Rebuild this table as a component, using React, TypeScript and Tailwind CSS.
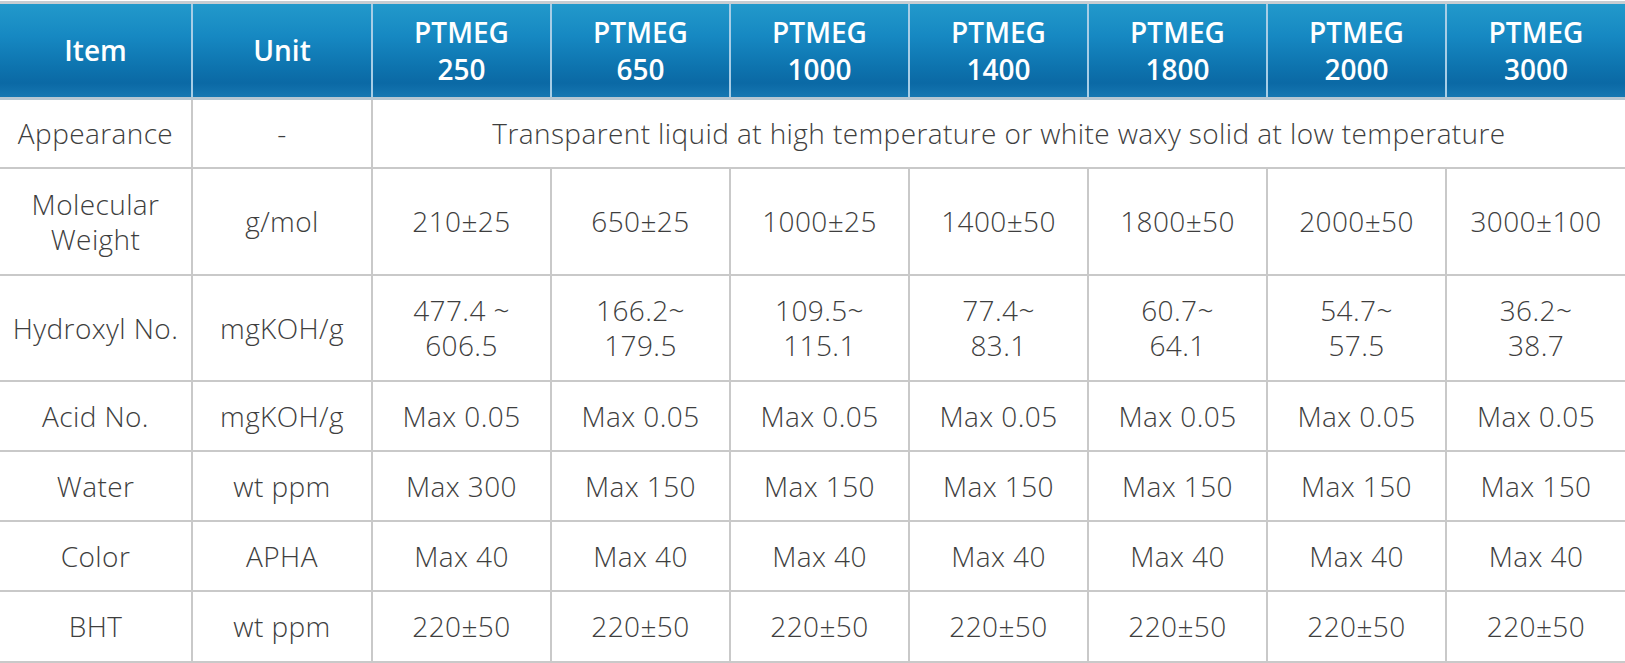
const columns = ['250', '650', '1000', '1400', '1800', '2000', '3000'];

type Row = {
  item: string[];
  unit: string;
  values?: string[][];
  span?: string;
  height: string;
};

const rows: Row[] = [
  {
    item: ['Appearance'],
    unit: '-',
    span: 'Transparent liquid at high temperature or white waxy solid at low temperature',
    height: 'h-[69px]',
  },
  {
    item: ['Molecular', 'Weight'],
    unit: 'g/mol',
    values: [['210±25'], ['650±25'], ['1000±25'], ['1400±50'], ['1800±50'], ['2000±50'], ['3000±100']],
    height: 'h-[107px]',
  },
  {
    item: ['Hydroxyl No.'],
    unit: 'mgKOH/g',
    values: [
      ['477.4 ~', '606.5'],
      ['166.2~', '179.5'],
      ['109.5~', '115.1'],
      ['77.4~', '83.1'],
      ['60.7~', '64.1'],
      ['54.7~', '57.5'],
      ['36.2~', '38.7'],
    ],
    height: 'h-[106px]',
  },
  {
    item: ['Acid No.'],
    unit: 'mgKOH/g',
    values: Array(7).fill(['Max 0.05']),
    height: 'h-[70px]',
  },
  {
    item: ['Water'],
    unit: 'wt ppm',
    values: [['Max 300'], ['Max 150'], ['Max 150'], ['Max 150'], ['Max 150'], ['Max 150'], ['Max 150']],
    height: 'h-[70px]',
  },
  {
    item: ['Color'],
    unit: 'APHA',
    values: Array(7).fill(['Max 40']),
    height: 'h-[70px]',
  },
  {
    item: ['BHT'],
    unit: 'wt ppm',
    values: Array(7).fill(['220±50']),
    height: 'h-[71px]',
  },
];

function Lines({ lines }: { lines: string[] }) {
  return (
    <div className="text-center leading-[35px] whitespace-nowrap">
      {lines.map((l, i) => (
        <div key={i}>{l}</div>
      ))}
    </div>
  );
}

function HeadCell({ lines, last }: { lines: string[]; last?: boolean }) {
  return (
    <div
      className={`flex items-center justify-center ${last ? '' : 'border-r-2 border-[#a7cde6]'}`}
    >
      <div className="text-center leading-[37px]">
        {lines.map((l, i) => (
          <div key={i}>{l}</div>
        ))}
      </div>
    </div>
  );
}

export default function App() {
  return (
    <div className="w-[1625px] h-[663px] bg-white pt-[1px] font-['Open_Sans','Liberation_Sans',sans-serif]">
      <div className="grid grid-cols-[193px_180px_repeat(6,179px)_1fr] border-t-[3px] border-[#c7cdd2]">
        {/* Header */}
        <div className="col-span-9 grid grid-cols-subgrid h-[96px] border-b-[3px] border-[#b6c6d2] bg-[linear-gradient(180deg,#2299cb_0%,#1688c2_35%,#0d72ad_70%,#0b69a5_85%,#1677b2_100%)] text-white font-semibold text-[28px]">
          <HeadCell lines={['Item']} />
          <HeadCell lines={['Unit']} />
          {columns.map((c, i) => (
            <HeadCell key={c} lines={['PTMEG', c]} last={i === columns.length - 1} />
          ))}
        </div>

        {/* Body */}
        {rows.map((row) => (
          <div
            key={row.item.join(' ')}
            className={`col-span-9 grid grid-cols-subgrid ${row.height} text-[28px] font-light tracking-[0.4px] text-[#3e3e3e]`}
          >
            <div className="flex items-center justify-center border-r-2 border-b-2 border-[#c9c9c9]">
              <Lines lines={row.item} />
            </div>
            <div className="flex items-center justify-center border-r-2 border-b-2 border-[#c9c9c9]">
              <Lines lines={[row.unit]} />
            </div>
            {row.span ? (
              <div className="col-span-7 flex items-center justify-center border-b-2 border-[#c9c9c9]">
                <Lines lines={[row.span]} />
              </div>
            ) : (
              row.values!.map((v, i) => (
                <div
                  key={i}
                  className={`flex items-center justify-center border-b-2 border-[#c9c9c9] ${
                    i === 6 ? '' : 'border-r-2'
                  }`}
                >
                  <Lines lines={v} />
                </div>
              ))
            )}
          </div>
        ))}
      </div>
    </div>
  );
}
